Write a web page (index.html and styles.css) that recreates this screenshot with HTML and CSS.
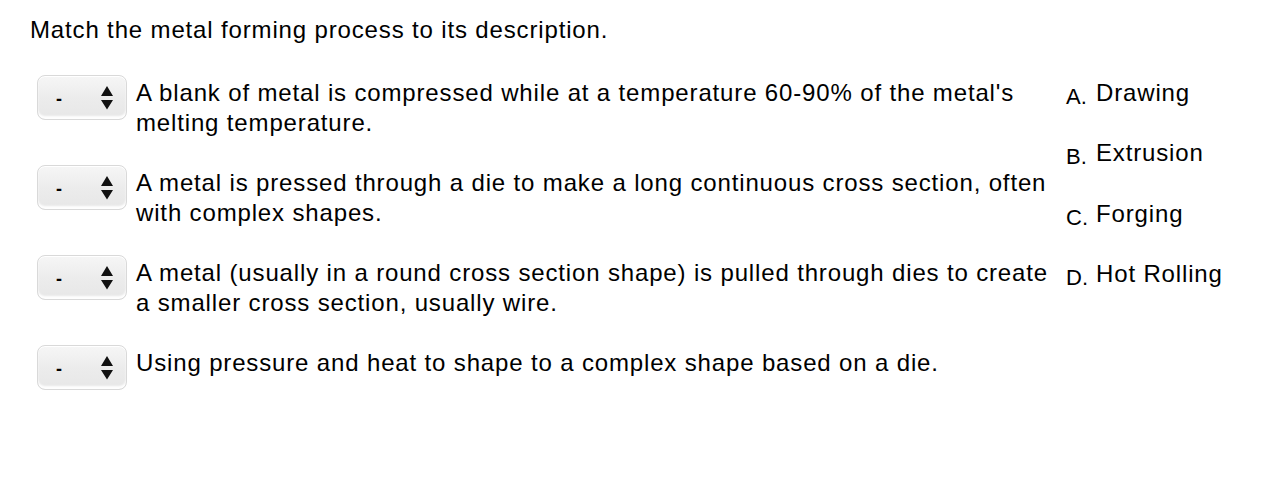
FILE: index.html
```html
<!DOCTYPE html>
<html lang="en">
<head>
    <meta charset="UTF-8">
    <title>Matching question</title>
    <link rel="stylesheet" href="styles.css">
</head>
<body>
    <div class="question-title">Match the metal forming process to its description.</div>

    <div class="match-area">
        <div class="match-list">
            <div class="match-row">
                <div class="picker">
                    <span class="picker-value">-</span>
                    <svg class="picker-arrows" width="12" height="24" viewBox="0 0 12 24"><path d="M6 0 L12 10 L0 10 Z M0 14 L12 14 L6 23.5 Z" fill="#111"/></svg>
                </div>
                <div class="match-text">A blank of metal is compressed while at a temperature 60-90% of the metal's melting temperature.</div>
            </div>
            <div class="match-row">
                <div class="picker">
                    <span class="picker-value">-</span>
                    <svg class="picker-arrows" width="12" height="24" viewBox="0 0 12 24"><path d="M6 0 L12 10 L0 10 Z M0 14 L12 14 L6 23.5 Z" fill="#111"/></svg>
                </div>
                <div class="match-text">A metal is pressed through a die to make a long continuous cross section, often with complex shapes.</div>
            </div>
            <div class="match-row">
                <div class="picker">
                    <span class="picker-value">-</span>
                    <svg class="picker-arrows" width="12" height="24" viewBox="0 0 12 24"><path d="M6 0 L12 10 L0 10 Z M0 14 L12 14 L6 23.5 Z" fill="#111"/></svg>
                </div>
                <div class="match-text">A metal (usually in a round cross section shape) is pulled through dies to create a smaller cross section, usually wire.</div>
            </div>
            <div class="match-row">
                <div class="picker">
                    <span class="picker-value">-</span>
                    <svg class="picker-arrows" width="12" height="24" viewBox="0 0 12 24"><path d="M6 0 L12 10 L0 10 Z M0 14 L12 14 L6 23.5 Z" fill="#111"/></svg>
                </div>
                <div class="match-text">Using pressure and heat to shape to a complex shape based on a die.</div>
            </div>
        </div>

        <div class="answer-list">
            <div class="answer"><span class="answer-letter">A.</span>Drawing</div>
            <div class="answer"><span class="answer-letter">B.</span>Extrusion</div>
            <div class="answer"><span class="answer-letter">C.</span>Forging</div>
            <div class="answer"><span class="answer-letter">D.</span>Hot Rolling</div>
        </div>
    </div>
</body>
</html>
```

FILE: styles.css
```css
* {
    margin: 0;
    padding: 0;
    box-sizing: border-box;
}

body {
    font-family: "Liberation Sans", Arial, Helvetica, sans-serif;
    font-size: 24px;
    line-height: 30px;
    letter-spacing: 0.85px;
    color: #000;
    background: #fff;
}

.question-title {
    padding: 15px 0 0 30px;
}

.match-area {
    display: flex;
    align-items: flex-start;
    margin-top: 30px;
    padding-left: 37px;
}

.match-list {
    width: 1025px;
}

.match-row {
    display: flex;
    align-items: flex-start;
    min-height: 90px;
}

/* dropdown look-alike: pale grey pill with up/down arrows */
.picker {
    flex: none;
    display: flex;
    align-items: center;
    width: 90px;
    height: 45px;
    padding: 0 13px 0 18px;
    border: 1px solid #d9d9d9;
    border-radius: 8px;
    background: linear-gradient(#f6f6f6, #ececec 50%, #e7e7e7);
    box-shadow: inset 0 -3px 2px rgba(255,255,255,0.95), inset 0 1px 0 #fff;
}

.picker-value {
    flex: 1;
    font-size: 18px;
    line-height: 18px;
    font-weight: bold;
    letter-spacing: 0;
    padding-top: 3px;
}

.picker-arrows {
    display: block;
}

.match-text {
    margin: 3px 0 0 9px;
}

.answer-list {
    margin: 3px 0 0 4px;
}

.answer {
    margin-bottom: 30.3px;
    white-space: nowrap;
}

.answer-letter {
    display: inline-block;
    width: 30px;
    font-size: 22px;
    line-height: 20px;
    letter-spacing: 0;
    vertical-align: -3px;
}
```
